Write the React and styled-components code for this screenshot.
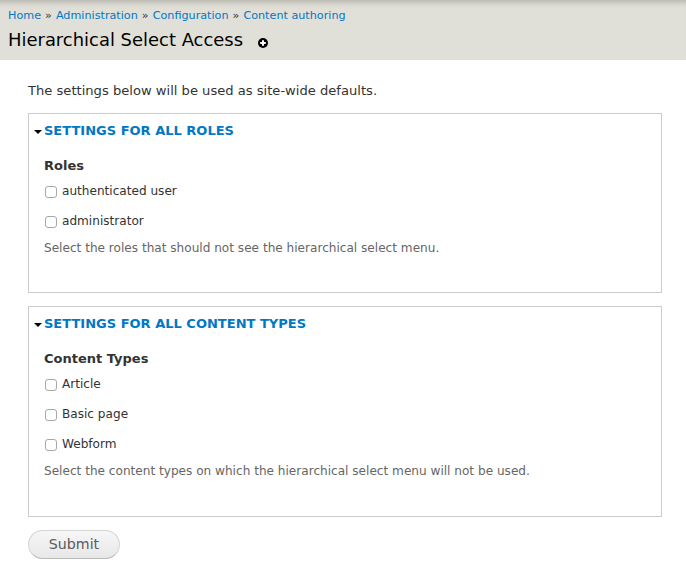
import React from 'react';
import styled, { createGlobalStyle } from 'styled-components';

const Global = createGlobalStyle`
  html, body { margin: 0; padding: 0; background: #fff; }
  body { font: 13px/20px "DejaVu Sans", sans-serif; color: #333; }
`;
const Header = styled.header`
  height: 60px;
  box-sizing: border-box;
  padding: 5px 8px 0;
  background: #e0e0d8;
  box-shadow: inset 0 8px 6px -6px rgba(0,0,0,0.22);
`;
const Crumbs = styled.nav`
  font-size: 11.2px;
  line-height: 21px;
  height: 20px;
  color: #333;
`;
const Crumb = styled.a`
  color: #0078c4;
`;
const Sep = styled.span`
  margin: 0 4px;
`;
const TitleRow = styled.div`
  display: flex;
  align-items: center;
  height: 30px;
`;
const Title = styled.h1`
  margin: 0;
  font-size: 17.95px;
  font-weight: 400;
  line-height: 30px;
  color: #000;
`;
const Shortcut = styled.svg`
  margin: 5px 0 0 15px;
  flex: none;
`;
const Main = styled.main`
  padding: 20px 24px 0 28px;
`;
const Intro = styled.p`
  margin: 0 0 13px;
  font-size: 13.1px;
  line-height: 21px;
  height: 20px;
`;
const Fieldset = styled.section`
  box-sizing: border-box;
  height: ${p => p.$h}px;
  border: 1px solid #ccc;
  margin-bottom: 13px;
  padding: 7px 15px 0 5px;
`;
const Legend = styled.div`
  display: flex;
  align-items: center;
  height: 20px;
  font-size: 13.03px;
  font-weight: 700;
  text-transform: uppercase;
  color: #0078c4;
`;
const Arrow = styled.span`
  width: 0;
  height: 0;
  margin: 1px 2px 0 0;
  border-style: solid;
  border-width: 4px 4px 0;
  border-color: #000 transparent transparent;
`;
const Body = styled.div`
  padding: 15px 0 0 10px;
`;
const GroupLabel = styled.div`
  font-weight: 700;
  line-height: 20px;
  margin-bottom: 5px;
  color: #333;
`;
const Option = styled.label`
  display: flex;
  align-items: center;
  height: 20px;
  margin-bottom: 10px;
  font-size: 12.1px;
`;
const Box = styled.input.attrs({ type: 'checkbox' })`
  appearance: none;
  box-sizing: border-box;
  width: 12px;
  height: 12px;
  margin: 2px 5px 0 1px;
  border: 1px solid #a8a8a8;
  border-radius: 3px;
  background: #fff;
`;
const Help = styled.div`
  margin-top: -3px;
  font-size: 12.1px;
  line-height: 20px;
  color: #666;
`;
const Submit = styled.button`
  display: block;
  width: 92px;
  height: 29px;
  padding: 0 0 2px;
  border: 1px solid #d4d4d4;
  border-bottom-color: #b8b8b8;
  border-radius: 15px;
  background: linear-gradient(#f6f6f6, #e8e8e8);
  font: 14.2px "DejaVu Sans", sans-serif;
  color: #5a5a5a;
`;

const Group = ({ h, legend, label, options, help }) => (
  <Fieldset $h={h}>
    <Legend><Arrow />{legend}</Legend>
    <Body>
      <GroupLabel>{label}</GroupLabel>
      {options.map(o => <Option key={o}><Box />{o}</Option>)}
      <Help>{help}</Help>
    </Body>
  </Fieldset>
);

export default function App() {
  return (
    <>
      <Global />
      <Header>
        <Crumbs>
          <Crumb>Home</Crumb><Sep>»</Sep>
          <Crumb>Administration</Crumb><Sep>»</Sep>
          <Crumb>Configuration</Crumb><Sep>»</Sep>
          <Crumb>Content authoring</Crumb>
        </Crumbs>
        <TitleRow>
          <Title>Hierarchical Select Access</Title>
          <Shortcut width="10" height="10" viewBox="0 0 10 10">
            <circle cx="5" cy="5" r="5" fill="#000" />
            <path d="M5 2.2v5.6M2.2 5h5.6" stroke="#fff" strokeWidth="2" />
          </Shortcut>
        </TitleRow>
      </Header>
      <Main>
        <Intro>The settings below will be used as site-wide defaults.</Intro>
        <Group h={180} legend="Settings for all roles" label="Roles"
          options={['authenticated user', 'administrator']}
          help="Select the roles that should not see the hierarchical select menu." />
        <Group h={211} legend="Settings for all content types" label="Content Types"
          options={['Article', 'Basic page', 'Webform']}
          help="Select the content types on which the hierarchical select menu will not be used." />
        <Submit>Submit</Submit>
      </Main>
    </>
  );
}
